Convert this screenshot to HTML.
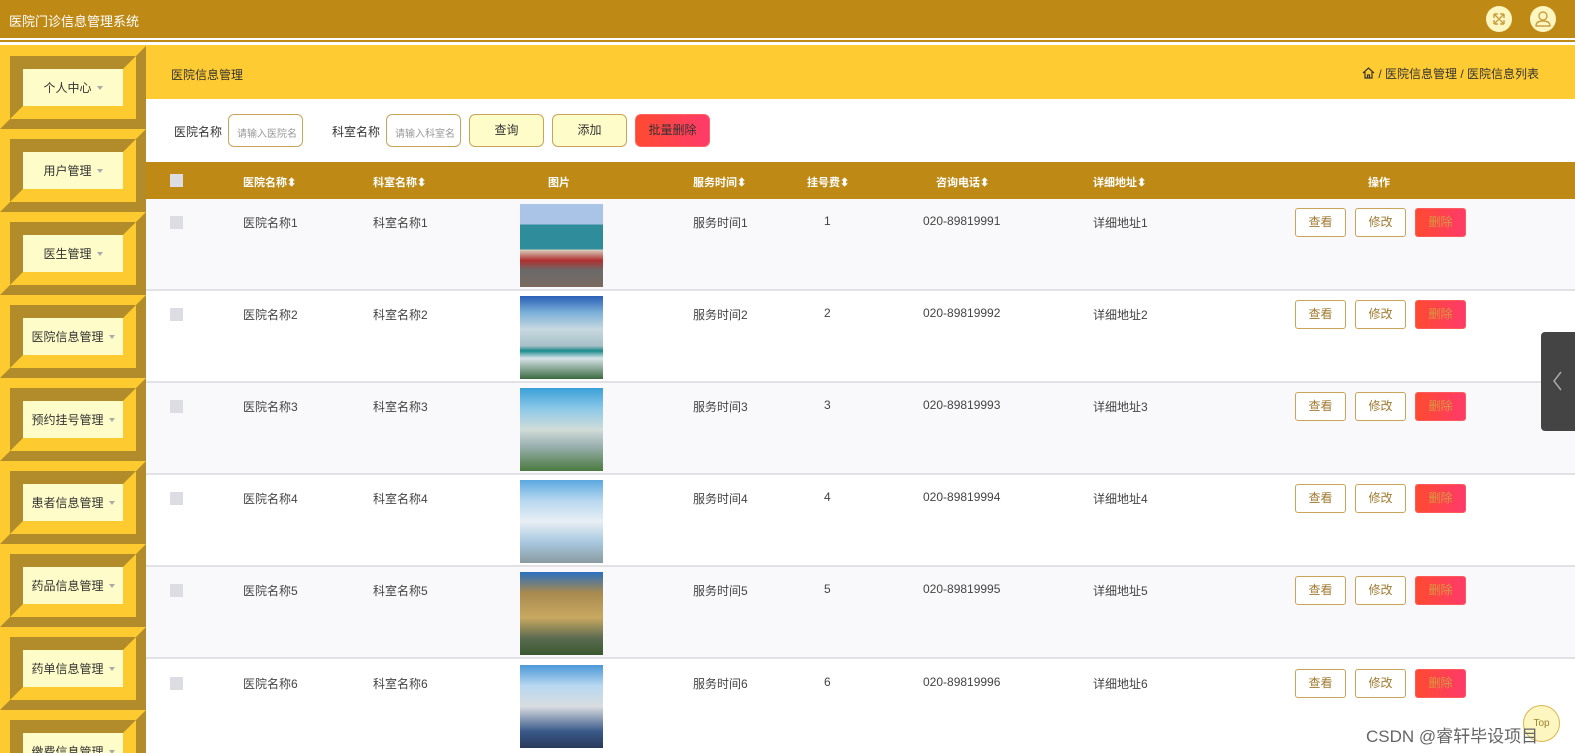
<!DOCTYPE html>
<html style="width:1575px;height:753px;overflow:hidden"><head><meta charset="utf-8"><style>
*{margin:0;padding:0;box-sizing:border-box}
body{width:1575px;height:753px;overflow:hidden;position:relative;background:#fff;font-family:"Liberation Sans","Noto Sans CJK SC",sans-serif;font-size:12px;color:#333}
.a{position:absolute}
.top{left:0;top:0;width:1575px;height:38px;background:#bf8916}
.title{left:9px;top:11px;color:#fff;font-size:13px}
.ic{width:26px;height:26px;border-radius:50%;background:#fdf6c0;top:6px}
.side{left:0;top:45px;width:146px;height:708px;background:#fdca30;overflow:hidden}
.it{left:0;width:146px;height:83px;border:10px solid;border-color:#fdca30 #b28c2a #b28c2a #fdca30}
.it .in{width:126px;height:63px;border:13px solid;border-color:#b28c2a #fdca30 #fdca30 #b28c2a;background:#fefcc8;display:flex;align-items:center;justify-content:center;font-size:12px;color:#333}
.it .in i{display:inline-block;margin-left:5px;border:3px solid transparent;border-top:4px solid #aaa;margin-top:4px}
.bc{left:146px;top:45px;width:1429px;height:54px;background:#ffcb33}
.lbl{font-size:12px;color:#333}
.inp{width:75px;height:33px;border:1px solid #c9a55a;border-radius:6px;font-size:10px;color:#999;padding:10px 0 0 8px;white-space:nowrap;overflow:hidden}
.btn{height:33px;border:1px solid #c9a55a;border-radius:6px;background:#fefcc8;text-align:center;line-height:31px;font-size:12px}
.th{left:146px;top:162px;width:1429px;height:37px;background:#bf8916;color:#fff;font-weight:bold;font-size:11px}
.th span{position:absolute;top:12px}
.row{left:146px;width:1429px;height:92px;border-bottom:2px solid #e2e2e6}
.row span{position:absolute;top:15px;font-size:12px;color:#444}
.cb{width:13px;height:13px;background:#dcdde2;position:absolute}
.img{position:absolute;left:374px;top:5px;width:83px;height:83px}
.b{position:absolute;top:9px;width:51px;height:29px;border:1px solid #c9a55a;border-radius:3px;background:#fff;text-align:center;line-height:27px;font-size:12px;color:#a07a30}
.bd{background:linear-gradient(90deg,#ff4a30,#ff3a6a);border-color:#ff5a5a;color:#d89a40}
</style></head><body>
<div class="a top"></div>
<div class="a title">医院门诊信息管理系统</div>
<div class="a ic" style="left:1486px"><svg width="26" height="26" viewBox="0 0 26 26" fill="none" stroke="#c9a040" stroke-width="1.4"><path d="M8 8l10 10M18 8L8 18M8 8h4M8 8v4M18 8h-4M18 8v4M8 18h4M8 18v-4M18 18h-4M18 18v-4"/></svg></div>
<div class="a ic" style="left:1530px"><svg width="26" height="26" viewBox="0 0 26 26" fill="none" stroke="#c9a040" stroke-width="1.4"><circle cx="13" cy="10" r="4"/><path d="M6 20c0-4 3-5 7-5s7 1 7 5z"/></svg></div>
<div class="a" style="left:0;top:38px;width:1575px;height:2px;background:#fff"></div>
<div class="a" style="left:0;top:40px;width:1575px;height:2px;background:#bf8916"></div>
<div class="a" style="left:0;top:42px;width:1575px;height:3px;background:#fff"></div>
<div class="a side">
<div class="a it" style="top:1px"><div class="in">个人中心<i></i></div></div>
<div class="a it" style="top:84px"><div class="in">用户管理<i></i></div></div>
<div class="a it" style="top:167px"><div class="in">医生管理<i></i></div></div>
<div class="a it" style="top:250px"><div class="in">医院信息管理<i></i></div></div>
<div class="a it" style="top:333px"><div class="in">预约挂号管理<i></i></div></div>
<div class="a it" style="top:416px"><div class="in">患者信息管理<i></i></div></div>
<div class="a it" style="top:499px"><div class="in">药品信息管理<i></i></div></div>
<div class="a it" style="top:582px"><div class="in">药单信息管理<i></i></div></div>
<div class="a it" style="top:665px"><div class="in">缴费信息管理<i></i></div></div>
</div>
<div class="a bc"></div>
<div class="a" style="left:171px;top:66px;font-size:12px">医院信息管理</div>
<div class="a" style="left:1362px;top:65px;font-size:12px;white-space:nowrap"><svg width="13" height="12" viewBox="0 0 13 12" fill="none" stroke="#333" stroke-width="1.2" style="vertical-align:-1px"><path d="M1 6L6.5 1 12 6M3 5v6h7V5M5.5 11V8h2v3"/></svg> / 医院信息管理 / 医院信息列表</div>
<div class="a lbl" style="left:174px;top:123px">医院名称</div>
<div class="a inp" style="left:228px;top:114px">请输入医院名</div>
<div class="a lbl" style="left:332px;top:123px">科室名称</div>
<div class="a inp" style="left:386px;top:114px">请输入科室名</div>
<div class="a btn" style="left:469px;top:114px;width:75px">查询</div>
<div class="a btn" style="left:552px;top:114px;width:75px">添加</div>
<div class="a btn" style="left:635px;top:114px;width:75px;background:linear-gradient(90deg,#ff4a30,#ff3a6a);border-color:#ff6060">批量删除</div>
<div class="a th"><div class="cb" style="left:24px;top:12px;background:#dcdde2"></div><span style="left:97px">医院名称⬍</span><span style="left:227px">科室名称⬍</span><span style="left:402px">图片</span><span style="left:547px">服务时间⬍</span><span style="left:661px">挂号费⬍</span><span style="left:790px">咨询电话⬍</span><span style="left:947px">详细地址⬍</span><span style="left:1222px">操作</span></div>

<div class="a row" style="top:199px;background:#f9f9fb"><div class="cb" style="left:24px;top:17px"></div><span style="left:97px">医院名称1</span><span style="left:227px">科室名称1</span><div class="img" style="background:linear-gradient(180deg,#a9c4e6 0%,#a9c4e6 25%,#2f8c9a 25%,#2f8c9a 55%,#d8d2c0 55%,#b03030 68%,#6a6a6a 80%,#7a6a60 100%)"></div><span style="left:547px">服务时间1</span><span style="left:678px">1</span><span style="left:777px">020-89819991</span><span style="left:947px">详细地址1</span><div class="b" style="left:1149px">查看</div><div class="b" style="left:1209px">修改</div><div class="b bd" style="left:1269px">删除</div></div>
<div class="a row" style="top:291px;background:#fff"><div class="cb" style="left:24px;top:17px"></div><span style="left:97px">医院名称2</span><span style="left:227px">科室名称2</span><div class="img" style="background:linear-gradient(180deg,#2a5fb8 0%,#7ab0d8 20%,#c8d8e0 40%,#a8c0c8 60%,#1a8a8a 66%,#d8e4ea 75%,#3a6a40 100%)"></div><span style="left:547px">服务时间2</span><span style="left:678px">2</span><span style="left:777px">020-89819992</span><span style="left:947px">详细地址2</span><div class="b" style="left:1149px">查看</div><div class="b" style="left:1209px">修改</div><div class="b bd" style="left:1269px">删除</div></div>
<div class="a row" style="top:383px;background:#f9f9fb"><div class="cb" style="left:24px;top:17px"></div><span style="left:97px">医院名称3</span><span style="left:227px">科室名称3</span><div class="img" style="background:linear-gradient(180deg,#3aa0d8 0%,#8cc8e8 25%,#d0dcd8 50%,#9ab0b0 70%,#4a7a40 100%)"></div><span style="left:547px">服务时间3</span><span style="left:678px">3</span><span style="left:777px">020-89819993</span><span style="left:947px">详细地址3</span><div class="b" style="left:1149px">查看</div><div class="b" style="left:1209px">修改</div><div class="b bd" style="left:1269px">删除</div></div>
<div class="a row" style="top:475px;background:#fff"><div class="cb" style="left:24px;top:17px"></div><span style="left:97px">医院名称4</span><span style="left:227px">科室名称4</span><div class="img" style="background:linear-gradient(180deg,#5aa8e0 0%,#b8d8f0 25%,#e8eef4 50%,#a8c8e0 75%,#8a9aa0 100%)"></div><span style="left:547px">服务时间4</span><span style="left:678px">4</span><span style="left:777px">020-89819994</span><span style="left:947px">详细地址4</span><div class="b" style="left:1149px">查看</div><div class="b" style="left:1209px">修改</div><div class="b bd" style="left:1269px">删除</div></div>
<div class="a row" style="top:567px;background:#f9f9fb"><div class="cb" style="left:24px;top:17px"></div><span style="left:97px">医院名称5</span><span style="left:227px">科室名称5</span><div class="img" style="background:linear-gradient(180deg,#2a70c0 0%,#a88a50 25%,#c8a860 55%,#5a6a50 80%,#3a5a30 100%)"></div><span style="left:547px">服务时间5</span><span style="left:678px">5</span><span style="left:777px">020-89819995</span><span style="left:947px">详细地址5</span><div class="b" style="left:1149px">查看</div><div class="b" style="left:1209px">修改</div><div class="b bd" style="left:1269px">删除</div></div>
<div class="a row" style="top:660px;background:#fff;border:none;height:93px"><div class="cb" style="left:24px;top:17px"></div><span style="left:97px">医院名称6</span><span style="left:227px">科室名称6</span><div class="img" style="background:linear-gradient(180deg,#4a98d8 0%,#b8d8f0 25%,#d8dce0 50%,#3a5a8a 80%,#2a3a5a 100%)"></div><span style="left:547px">服务时间6</span><span style="left:678px">6</span><span style="left:777px">020-89819996</span><span style="left:947px">详细地址6</span><div class="b" style="left:1149px">查看</div><div class="b" style="left:1209px">修改</div><div class="b bd" style="left:1269px">删除</div></div>

<div class="a" style="left:1541px;top:332px;width:34px;height:99px;background:#444;border-radius:4px 0 0 4px"><svg width="34" height="99" viewBox="0 0 34 99" fill="none" stroke="#aaa" stroke-width="1.5"><path d="M20 40l-7 9 7 9"/></svg></div>
<div class="a" style="left:1523px;top:705px;width:37px;height:37px;border-radius:50%;background:#fdf6c0;border:1px solid #d8b850;font-size:10px;color:#a08030;text-align:center;line-height:35px">Top</div>
<div class="a" style="left:1366px;top:722px;font-size:17px;color:#666;white-space:nowrap">CSDN @睿轩毕设项目</div>
</body></html>
